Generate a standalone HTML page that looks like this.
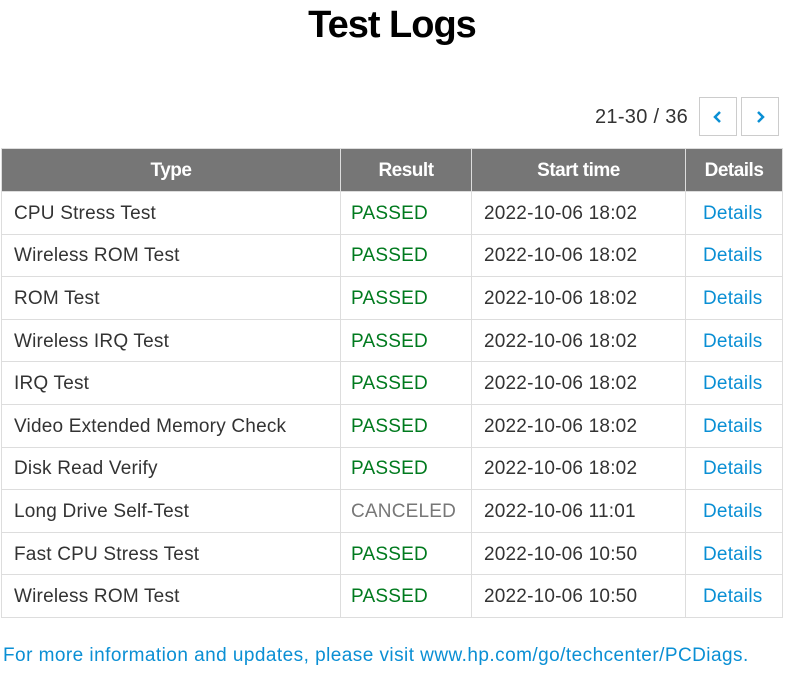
<!DOCTYPE html>
<html><head><meta charset="utf-8"><style>
body{margin:0;width:791px;height:684px;background:#fff;font-family:"Liberation Sans",sans-serif;color:#333;position:relative;overflow:hidden}
h1{position:absolute;top:4px;left:0;width:784px;text-align:center;margin:0;font-size:38px;font-weight:bold;color:#000;letter-spacing:-1px}
.pg{position:absolute;top:106px;left:595px;font-size:20px;color:#333;letter-spacing:0.3px}
.btn{position:absolute;top:97px;width:38px;height:39px;border:1px solid #ccc;box-sizing:border-box}
.btn svg{position:absolute;left:12px;top:12px}
table{position:absolute;top:148px;left:1px;border-collapse:collapse;width:781px;table-layout:fixed}
th{background:#767676;color:#fff;font-size:19px;font-weight:bold;height:40px;border:1px solid #ddd;padding:2px 0 0;letter-spacing:-0.5px}
td{height:39.6px;border:1px solid #ddd;font-size:19px;padding:2px 0 0 12px;white-space:nowrap;letter-spacing:0.2px}
td.p{color:#007a1e;padding-left:10px}
td.c{color:#777;padding-left:10px}
td.d{color:#0a8fd4;padding-left:17px}
.ft{position:absolute;top:645px;left:3px;font-size:19px;color:#0a8fd4;letter-spacing:0.45px}
</style></head><body>
<h1>Test Logs</h1>
<div class="pg">21-30 / 36</div>
<div class="btn" style="left:699px"><svg width="12" height="14" viewBox="0 0 12 14"><path d="M8 2L3 7L8 12" fill="none" stroke="#0a8fd4" stroke-width="2.5"/></svg></div>
<div class="btn" style="left:741px"><svg width="12" height="14" viewBox="0 0 12 14"><path d="M4 2L9 7L4 12" fill="none" stroke="#0a8fd4" stroke-width="2.5"/></svg></div>
<table>
<colgroup><col style="width:339px"><col style="width:131px"><col style="width:214px"><col style="width:97px"></colgroup>
<tr><th>Type</th><th>Result</th><th>Start time</th><th>Details</th></tr>
<tr><td>CPU Stress Test</td><td class="p">PASSED</td><td>2022-10-06 18:02</td><td class="d">Details</td></tr>
<tr><td>Wireless ROM Test</td><td class="p">PASSED</td><td>2022-10-06 18:02</td><td class="d">Details</td></tr>
<tr><td>ROM Test</td><td class="p">PASSED</td><td>2022-10-06 18:02</td><td class="d">Details</td></tr>
<tr><td>Wireless IRQ Test</td><td class="p">PASSED</td><td>2022-10-06 18:02</td><td class="d">Details</td></tr>
<tr><td>IRQ Test</td><td class="p">PASSED</td><td>2022-10-06 18:02</td><td class="d">Details</td></tr>
<tr><td>Video Extended Memory Check</td><td class="p">PASSED</td><td>2022-10-06 18:02</td><td class="d">Details</td></tr>
<tr><td>Disk Read Verify</td><td class="p">PASSED</td><td>2022-10-06 18:02</td><td class="d">Details</td></tr>
<tr><td>Long Drive Self-Test</td><td class="c">CANCELED</td><td>2022-10-06 11:01</td><td class="d">Details</td></tr>
<tr><td>Fast CPU Stress Test</td><td class="p">PASSED</td><td>2022-10-06 10:50</td><td class="d">Details</td></tr>
<tr><td>Wireless ROM Test</td><td class="p">PASSED</td><td>2022-10-06 10:50</td><td class="d">Details</td></tr>
</table>
<div class="ft">For more information and updates, please visit www.hp.com/go/techcenter/PCDiags.</div>
</body></html>
